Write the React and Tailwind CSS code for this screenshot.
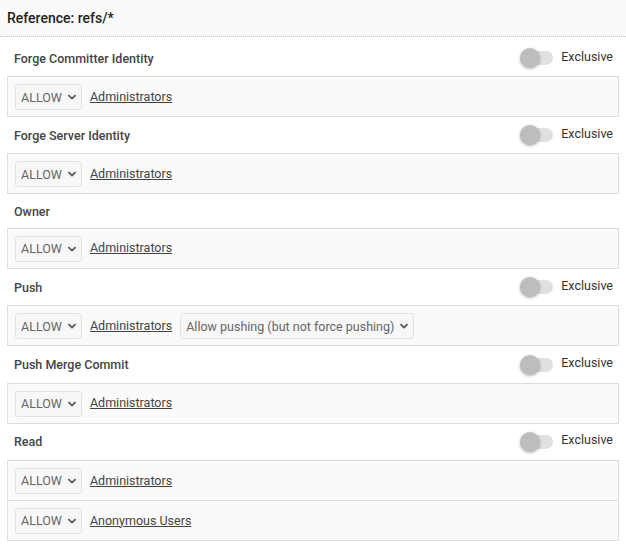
import React from 'react';

const sections = [
    { title: 'Forge Committer Identity', exclusive: true, rules: [{ group: 'Administrators' }] },
    { title: 'Forge Server Identity', exclusive: true, rules: [{ group: 'Administrators' }] },
    { title: 'Owner', exclusive: false, rules: [{ group: 'Administrators' }] },
    {
        title: 'Push',
        exclusive: true,
        rules: [{ group: 'Administrators', force: 'Allow pushing (but not force pushing)' }]
    },
    { title: 'Push Merge Commit', exclusive: true, rules: [{ group: 'Administrators' }] },
    {
        title: 'Read',
        exclusive: true,
        rules: [{ group: 'Administrators' }, { group: 'Anonymous Users' }]
    }
];

const Chevron = () => (
    <svg width="10" height="10" viewBox="0 0 10 10" className="ml-[5px]">
        <path d="M1.5 3.2 L5 6.6 L8.5 3.2" fill="none" stroke="#555" strokeWidth="1.8" />
    </svg>
);

const FakeSelect = ({ label }) => (
    <div className="flex h-[26px] items-center rounded-[3px] border border-[#e2e2e2] bg-[#f7f7f7] pl-[5px] pr-[4px] text-[12.5px] leading-[17px] text-[#666]">
        {label}
        <Chevron />
    </div>
);

const Toggle = () => (
    <div className="flex h-[20px] items-center gap-[8px]">
        <div className="relative h-[20px] w-[33px]">
            <div className="absolute left-[2px] top-[3px] h-[14px] w-[31px] rounded-full bg-[#e0e0e0]" />
            <div className="absolute left-0 top-0 h-[20px] w-[20px] rounded-full bg-[#bdbdbd] shadow-[0_1px_3px_rgba(0,0,0,0.3)]" />
        </div>
        <span className="-mt-[4px] text-[12.5px] leading-[17px] text-[#333]">Exclusive</span>
    </div>
);

const Section = ({ title, exclusive, rules, first }) => (
    <div className={first ? 'mt-[11px]' : 'mt-[8.4px]'}>
        <div className="mb-[8px] flex items-center justify-between pl-[7px] pr-[6px]">
            <span className="text-[12.5px] font-medium leading-[17px] text-[#444]">{title}</span>
            {exclusive && <Toggle />}
        </div>
        <div className="border border-[#dddddd] bg-[#fafafa]">
            {rules.map((r, i) => (
                <div
                    key={i}
                    className={`flex items-center gap-[8px] px-[7px] pt-[1px] ${i > 0 ? 'h-[40px] border-t border-[#dddddd]' : 'h-[39px]'}`}
                >
                    <FakeSelect label="ALLOW" />
                    <a href="#" className="text-[12.5px] text-[#444] underline">
                        {r.group}
                    </a>
                    {r.force && <FakeSelect label={r.force} />}
                </div>
            ))}
        </div>
    </div>
);

export default function App() {
    return (
        <div className="h-[550px] w-[626px] overflow-hidden bg-white font-['Roboto',sans-serif]">
            <div className="flex h-[37px] items-center border-b border-dotted border-[#c8c8c8] bg-[#fafafa] px-[7px]">
                <span className="text-[14px] font-medium text-[#222]">Reference: refs/*</span>
            </div>
            <div className="px-[7px]">
                {sections.map((s, i) => (
                    <Section key={s.title} {...s} first={i === 0} />
                ))}
            </div>
        </div>
    );
}
